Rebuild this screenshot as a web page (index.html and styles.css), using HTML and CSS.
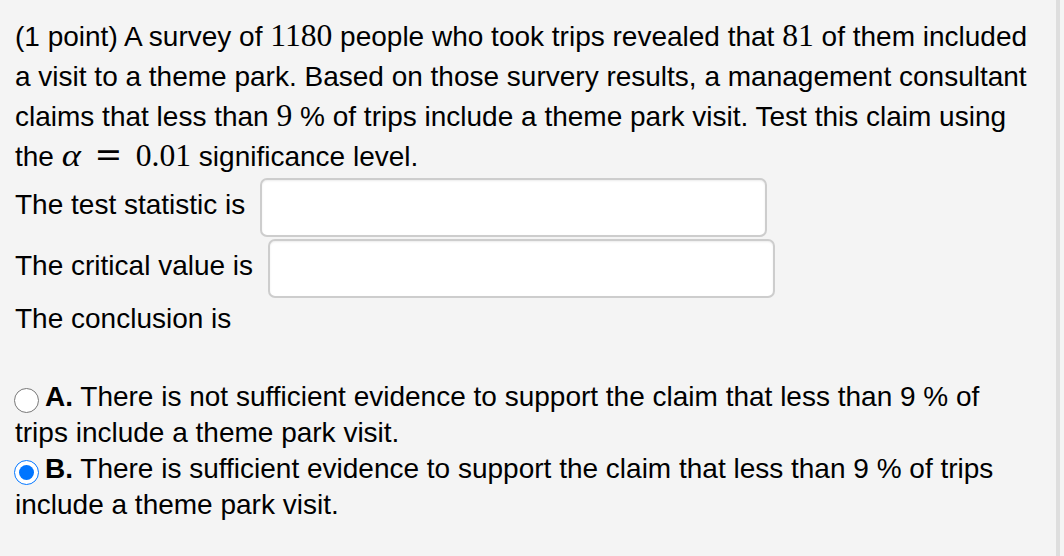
FILE: index.html
```html
<!DOCTYPE html>
<html>
<head>
<meta charset="utf-8">
<link rel="stylesheet" href="styles.css">
</head>
<body>
<div class="page">
  <div class="problem">
    <p class="stmt">(1 point) A survey of <span class="m">1180</span> people who took trips revealed that <span class="m">81</span> of them included a visit to a theme park. Based on those survery results, a management consultant claims that less than <span class="m">9</span> % of trips include a theme park visit. Test this claim using the <span class="m"><i>α</i><span class="eq">=</span>0.01</span> significance level.</p>
    <div class="row">
      <span class="lbl">The test statistic is</span>
      <input class="ans" type="text">
    </div>
    <div class="row">
      <span class="lbl">The critical value is</span>
      <input class="ans" type="text">
    </div>
    <div class="concl">The conclusion is</div>
    <div class="opts">
      <label class="opt"><input type="radio" name="c" class="rad"><b>A.</b> There is not sufficient evidence to support the claim that less than 9 % of trips include a theme park visit.</label>
      <label class="opt"><input type="radio" name="c" class="rad" checked><b>B.</b> There is sufficient evidence to support the claim that less than 9 % of trips include a theme park visit.</label>
    </div>
  </div>
</div>
</body>
</html>
```

FILE: styles.css
```css
html, body {
  margin: 0;
  padding: 0;
  background: #f4f4f4;
}
.page {
  width: 1060px;
  height: 556px;
  box-sizing: border-box;
  border-right: 4px solid #dedede;
  background: #f4f4f4;
  font-family: "Liberation Sans", Arial, sans-serif;
  font-size: 28px;
  color: #000;
}
.problem {
  width: 1022px;
  padding: 17px 0 0 15px;
}
.stmt {
  margin: 0;
  line-height: 40px;
}
.m {
  font-family: "Liberation Serif", "Times New Roman", serif;
  font-size: 1.13em;
  line-height: 1;
}
.m i {
  font-style: italic;
  display: inline-block;
  transform: scaleX(1.15);
  margin: 0 2px 0 1px;
}
.eq {
  font-family: "DejaVu Serif", serif;
  font-size: 1.05em;
  padding: 0 0.4em;
}
.row {
  display: flex;
  align-items: flex-start;
  margin-top: 1px;
}
.row + .row {
  margin-top: 2px;
}
.lbl {
  line-height: 40px;
  margin-top: 7px;
  white-space: nowrap;
}
.ans {
  width: 507px;
  height: 59px;
  box-sizing: border-box;
  margin: 0 0 0 15px;
  border: 2px solid #cdcdcd;
  border-radius: 7px;
  background: #fff;
  box-shadow: inset 0 1px 2px rgba(0,0,0,0.08);
  font-size: 20px;
  padding: 4px 8px;
}
.concl {
  line-height: 40px;
  margin-top: 1px;
}
.opts {
  margin-top: 40px;
  line-height: 36px;
}
.opt {
  display: block;
}
.opt b {
  font-weight: bold;
}
.rad {
  width: 25px;
  height: 25px;
  margin: 0 6px 0 -1px;
  vertical-align: -7px;
}
```
